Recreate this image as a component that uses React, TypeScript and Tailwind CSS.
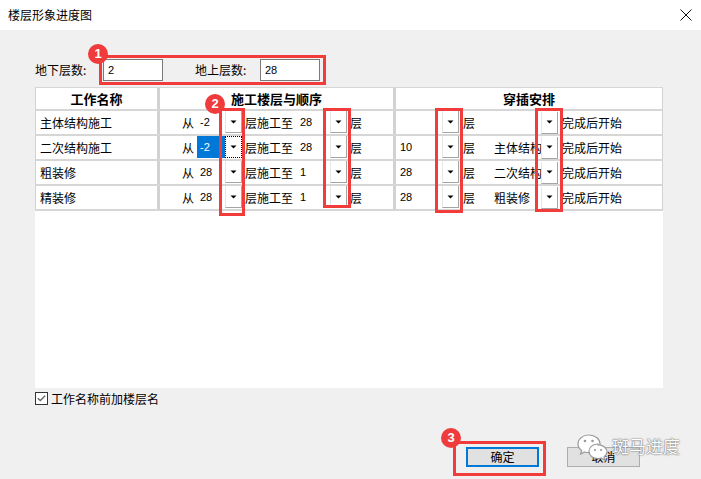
import React from "react"

const cjk = "font-['Noto_Sans_CJK_SC','Microsoft_YaHei',sans-serif]"
const num = "font-['Liberation_Sans',Arial,sans-serif] text-[11px]"

type Row = {
  name: string
  from: string
  to: string
  after: string
  pred: string
  selected?: boolean
}

const rows: Row[] = [
  { name: "主体结构施工", from: "-2", to: "28", after: "", pred: "" },
  { name: "二次结构施工", from: "-2", to: "28", after: "10", pred: "主体结构", selected: true },
  { name: "粗装修", from: "28", to: "1", after: "28", pred: "二次结构" },
  { name: "精装修", from: "28", to: "1", after: "28", pred: "粗装修" },
]

function Arrow() {
  return (
    <svg width="7" height="4" viewBox="0 0 7 4">
      <path d="M0.5 0.5h6L3.5 3.5z" fill="#000" />
    </svg>
  )
}

function Combo({
  width,
  value,
  pad,
  selected,
  focus,
  text,
}: {
  width: string
  value: string
  pad: string
  selected?: boolean
  focus?: boolean
  text?: boolean
}) {
  return (
    <div className={`flex h-[22px] self-start ${width}`}>
      <div
        className={`flex-1 min-w-0 overflow-hidden whitespace-nowrap flex items-center ${pad} ${
          selected ? "bg-[#0078d7] text-white" : ""
        } ${text ? "text-[12px]" : num}`}
      >
        {value}
      </div>
      <div
        className={`w-[17px] h-[22px] shrink-0 flex items-center justify-center bg-white ${
          focus
            ? "border border-dotted border-black"
            : "border-l border-l-[#e6e6e6] border-r border-r-[#a5a5a5] border-b border-b-[#a5a5a5]"
        }`}
      >
        <Arrow />
      </div>
    </div>
  )
}

function RedBox({ className }: { className: string }) {
  return <div className={`absolute border-[3px] border-[#f23c3c] ${className}`} />
}

function Badge({ n, className }: { n: string; className: string }) {
  return (
    <div
      className={`absolute w-[20px] h-[20px] rounded-full bg-[#ef3b3b] text-white flex items-center justify-center text-[13px] font-bold font-['Liberation_Sans',Arial,sans-serif] ${className}`}
    >
      {n}
    </div>
  )
}

function FieldBox({ value }: { value: string }) {
  return (
    <div className={`w-[60px] h-[22px] bg-white border border-[#7a7a7a] pl-[4px] pt-[2px] ${num}`}>{value}</div>
  )
}

export default function App() {
  return (
    <div className={`relative w-[701px] h-[479px] overflow-hidden bg-[#f0f0f0] text-[12px] text-black ${cjk}`}>
      {/* title bar */}
      <div className="h-[30px] bg-white flex items-center justify-between pl-[8px] pr-[9px]">
        <span className="leading-none">楼层形象进度图</span>
        <svg width="12" height="12" viewBox="0 0 12 12">
          <path d="M0.5 0.5L11.5 11.5M11.5 0.5L0.5 11.5" stroke="#111" strokeWidth="1" />
        </svg>
      </div>

      {/* floor counts */}
      <div className="flex items-center pl-[35px] mt-[29px] h-[22px]">
        <span className="w-[68px] leading-none">地下层数:</span>
        <FieldBox value="2" />
        <span className="ml-[32px] w-[65px] leading-none">地上层数:</span>
        <FieldBox value="28" />
      </div>

      {/* table */}
      <div className="ml-[35px] mt-[6px] w-[628px] h-[301px] bg-white">
        <div className="flex h-[24px] border-t border-b-2 border-[#d6d6d6] font-bold text-[13px]">
          <div className="w-[125px] border-l border-r-[3px] border-[#d2d2d2] flex items-center justify-center">
            工作名称
          </div>
          <div className="w-[236px] border-r-[3px] border-[#d2d2d2] flex items-center justify-center">
            施工楼层与顺序
          </div>
          <div className="flex-1 border-r border-[#d2d2d2] flex items-center justify-center">穿插安排</div>
        </div>
        {rows.map((r) => (
          <div key={r.name} className="flex h-[25px] border-b-2 border-[#d6d6d6]">
            <div className="w-[125px] border-l border-r-[3px] border-[#d2d2d2] flex items-center pl-[4px]">
              {r.name}
            </div>
            <div className="w-[236px] border-r-[3px] border-[#d2d2d2] flex items-center pl-[22px]">
              <span className="w-[15px]">从</span>
              <Combo width="w-[45px]" pad="pl-[3px]" value={r.from} selected={r.selected} focus={r.selected} />
              <span className="ml-[3px] w-[52px]">层施工至</span>
              <Combo width="w-[50px]" pad="pl-[3px]" value={r.to} />
              <span className="ml-[3px]">层</span>
            </div>
            <div className="flex-1 border-r border-[#d2d2d2] flex items-center pl-[2px]">
              <Combo width="w-[61px]" pad="pl-[2px]" value={r.after} />
              <span className="ml-[4px] w-[12px]">层</span>
              <div className="ml-[15px] flex">
                <Combo width="w-[68px]" pad="pl-[4px]" value={r.pred} text />
              </div>
              <span className="ml-[4px]">完成后开始</span>
            </div>
          </div>
        ))}
      </div>

      {/* checkbox */}
      <div className="flex items-center pl-[35px] mt-[4px] h-[13px]">
        <div className="w-[13px] h-[13px] border border-[#333] bg-white flex items-center justify-center">
          <svg width="9" height="7" viewBox="0 0 9 7">
            <path d="M0.8 3.2L3.3 5.6L8.2 0.8" stroke="#666" strokeWidth="1.4" fill="none" />
          </svg>
        </div>
        <span className="ml-[3px] leading-none">工作名称前加楼层名</span>
      </div>

      {/* buttons */}
      <div className="flex justify-end pr-[61px] gap-[28px] mt-[42px]">
        <button
          type="button"
          className="w-[73px] h-[20px] bg-[#e1e1e1] border-2 border-[#0078d7] flex items-center justify-center leading-none"
        >
          确定
        </button>
        <button
          type="button"
          className="w-[73px] h-[20px] bg-[#e1e1e1] border border-[#adadad] flex items-center justify-center leading-none"
        >
          取消
        </button>
      </div>

      {/* watermark */}
      <svg className="absolute left-[576px] top-[433px]" width="34" height="30" viewBox="0 0 34 30">
        <g stroke="#9a9a9a" strokeWidth="1.2" fill="#fff">
          <path d="M13 2C6.5 2 2 6 2 11c0 2.8 1.4 5 3.6 6.6L4.6 21l4-2c1.4 0.5 2.8 0.7 4.4 0.7 6.5 0 11-4 11-8.7S19.5 2 13 2z" />
          <path d="M22 11c-5.3 0-9 3.3-9 7.3s3.7 7.3 9 7.3c1.2 0 2.3-0.2 3.3-0.5L28.8 27l-0.8-3c1.9-1.3 3-3 3-4.9 0-4-3.7-7.3-9-7.3z" />
        </g>
        <circle cx="9" cy="8" r="1.3" fill="#9a9a9a" />
        <circle cx="16.5" cy="8" r="1.3" fill="#9a9a9a" />
        <circle cx="19" cy="17" r="1.1" fill="#9a9a9a" />
        <circle cx="25" cy="17" r="1.1" fill="#9a9a9a" />
      </svg>
      <div className="absolute left-[612px] top-[437px] text-[17px] leading-none text-white [text-shadow:0_0_1px_#555,0_0_2px_#777]">
        斑马进度
      </div>

      {/* annotations */}
      <RedBox className="left-[99px] top-[55px] w-[227px] h-[30px]" />
      <RedBox className="left-[219px] top-[108px] w-[26px] h-[108px]" />
      <RedBox className="left-[323px] top-[108px] w-[28px] h-[100px]" />
      <RedBox className="left-[435px] top-[108px] w-[28px] h-[105px]" />
      <RedBox className="left-[535px] top-[108px] w-[28px] h-[104px]" />
      <RedBox className="left-[453px] top-[441px] w-[93px] h-[35px]" />
      <Badge n="1" className="left-[88px] top-[44px]" />
      <Badge n="2" className="left-[205px] top-[94px]" />
      <Badge n="3" className="left-[441px] top-[428px]" />
    </div>
  )
}
